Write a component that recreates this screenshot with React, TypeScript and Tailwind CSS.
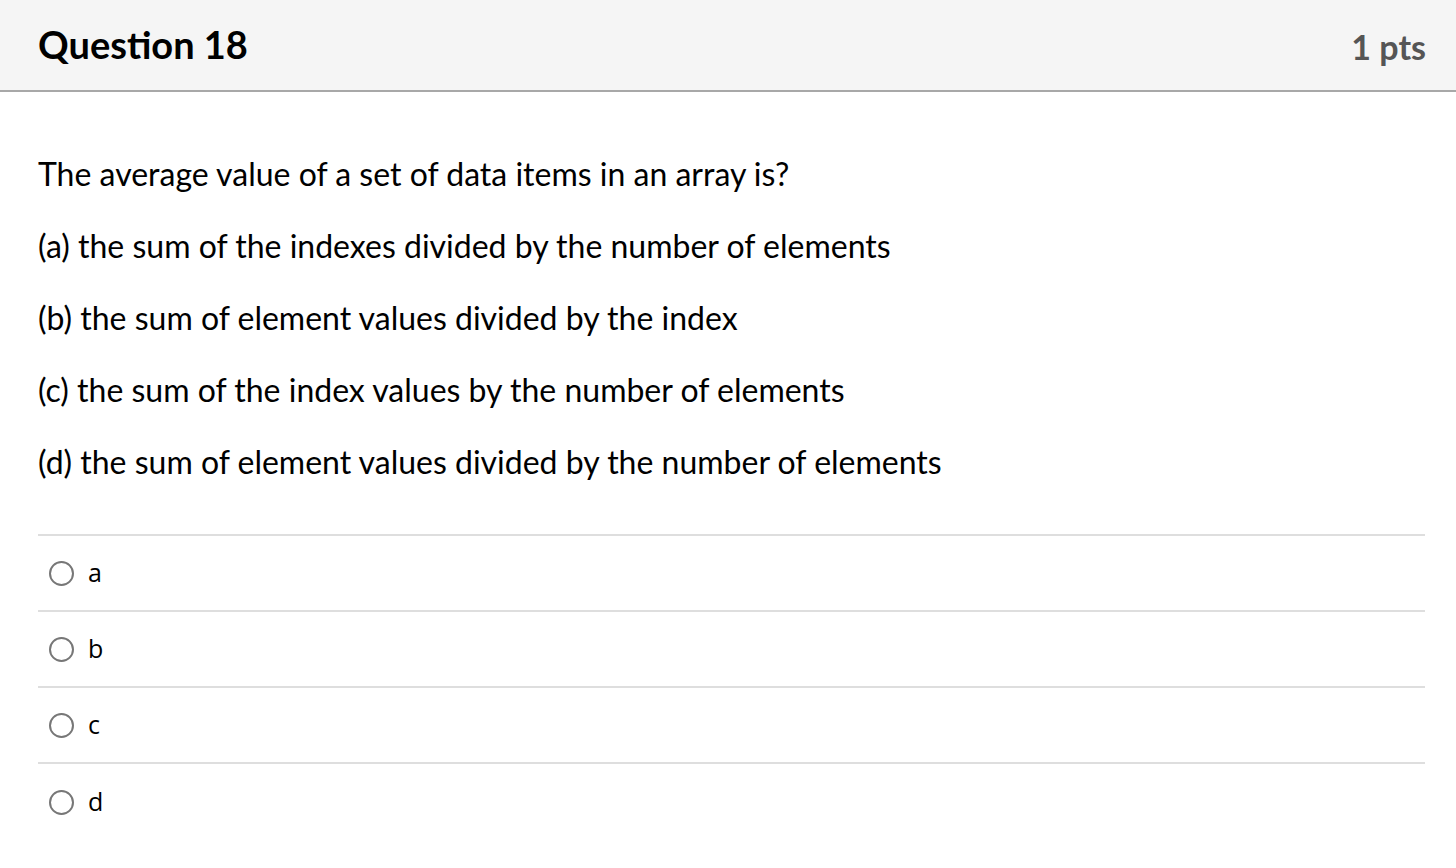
const options = ["a", "b", "c", "d"];

const lines = [
  "(a) the sum of the indexes divided by the number of elements",
  "(b) the sum of element values divided by the index",
  "(c) the sum of the index values by the number of elements",
  "(d) the sum of element values divided by the number of elements",
];

export default function App() {
  return (
    <div className="min-h-screen w-full bg-white text-black" style={{ fontFamily: "Lato, 'Open Sans', sans-serif" }}>
      <header className="flex h-[92px] items-center justify-between border-b-2 border-[#a8a8a8] bg-[#f5f5f5] pl-[38px] pr-[30px] pb-[2px]">
        <h1 className="text-[38px] font-bold text-black">Question 18</h1>
        <span className="pt-[4px] text-[34px] font-bold text-[#555555]">1 pts</span>
      </header>

      <section className="pl-[38px] pr-[31px] pt-[60px]">
        <p className="text-[32px] leading-[44px]">The average value of a set of data items in an array is?</p>
        {lines.map((line) => (
          <p key={line} className="mt-[28px] text-[32px] leading-[44px]">
            {line}
          </p>
        ))}

        <div className="mt-[50px] border-t-2 border-[#dedede]">
          {options.map((opt, i) => (
            <label
              key={opt}
              className={`flex h-[76px] items-center gap-[14px] pl-[11px] ${i < options.length - 1 ? "border-b-2 border-[#dedede]" : ""}`}
            >
              <span className="h-[25px] w-[25px] rounded-full border-2 border-[#777777] bg-white" />
              <span className="text-[25px] text-black" style={{ fontFamily: "'Open Sans', 'Noto Sans', sans-serif" }}>
                {opt}
              </span>
            </label>
          ))}
        </div>
      </section>
    </div>
  );
}
